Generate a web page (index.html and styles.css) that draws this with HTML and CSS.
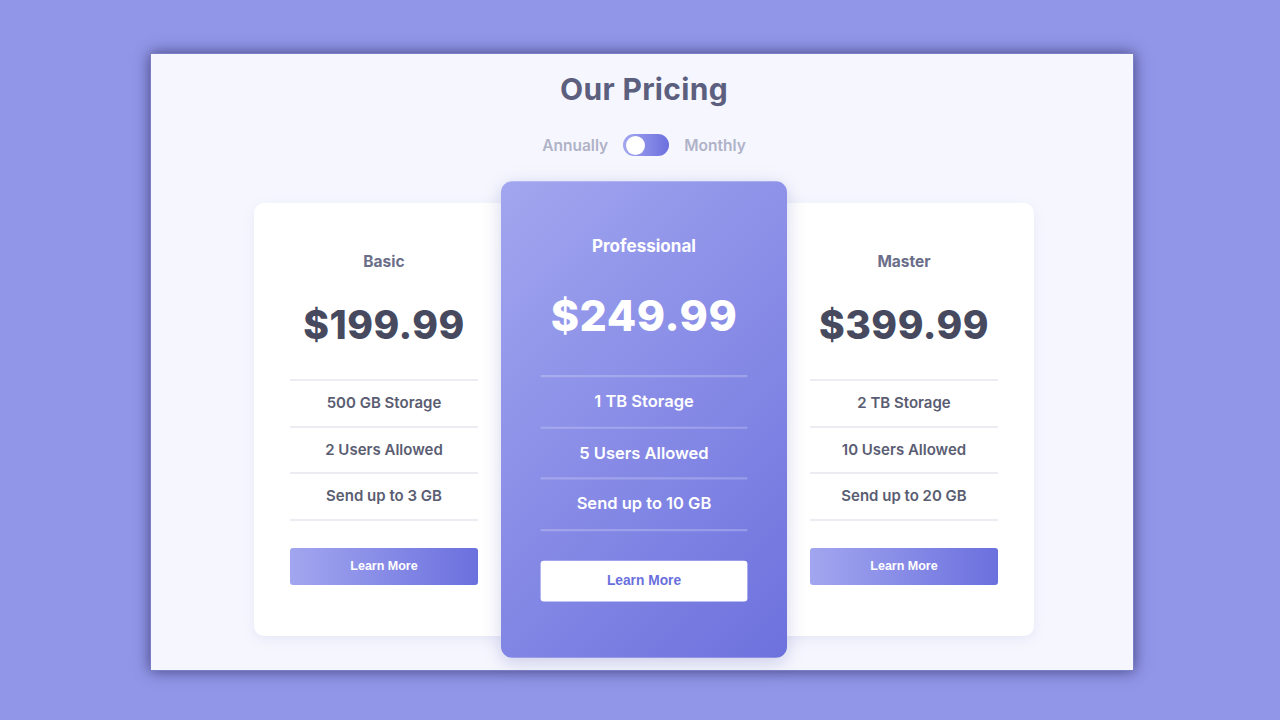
FILE: index.html
```html
<!DOCTYPE html>
<html>
<head>
<meta charset="utf-8">
<link rel="stylesheet" href="styles.css">
</head>
<body>
<div class="panel">
  <h1 class="title">Our Pricing</h1>
  <div class="toggle-row">
    <span class="toggle-label">Annually</span>
    <span class="toggle"><span class="knob"></span></span>
    <span class="toggle-label">Monthly</span>
  </div>
  <div class="cards">
    <div class="card">
      <div class="plan">Basic</div>
      <div class="price">$199.99</div>
      <ul class="features">
        <li>500 GB Storage</li>
        <li>2 Users Allowed</li>
        <li>Send up to 3 GB</li>
      </ul>
      <button class="btn">Learn More</button>
    </div>
    <div class="card card-pro">
      <div class="plan">Professional</div>
      <div class="price">$249.99</div>
      <ul class="features">
        <li>1 TB Storage</li>
        <li>5 Users Allowed</li>
        <li>Send up to 10 GB</li>
      </ul>
      <button class="btn">Learn More</button>
    </div>
    <div class="card">
      <div class="plan">Master</div>
      <div class="price">$399.99</div>
      <ul class="features">
        <li>2 TB Storage</li>
        <li>10 Users Allowed</li>
        <li>Send up to 20 GB</li>
      </ul>
      <button class="btn">Learn More</button>
    </div>
  </div>
</div>
</body>
</html>
```
FILE: styles.css
```css
html, body {
  margin: 0;
  padding: 0;
}
body {
  background: #9196e8;
  width: 1280px;
  height: 720px;
  overflow: hidden;
  font-family: "Inter", "Open Sans", sans-serif;
  padding-top: 53px;
  box-sizing: border-box;
}
.panel {
  margin-left: 150px;
  width: 984px;
  height: 618px;
  box-sizing: border-box;
  background: #f6f7fe;
  box-shadow: 0 0 14px rgba(40, 40, 90, 0.75);
  border: 1px solid #7b7fc6;
  padding-top: 15px;
  display: flex;
  flex-direction: column;
  align-items: center;
}
.title {
  margin: 0 0 0 4px;
  font-size: 30px;
  line-height: 40px;
  font-weight: 700;
  color: #5c5f7e;
  letter-spacing: 0.3px;
}
.toggle-row {
  margin-top: 25px;
  margin-left: 4px;
  display: flex;
  align-items: center;
  gap: 15px;
}
.toggle-label {
  font-size: 15.5px;
  font-weight: 600;
  color: #b0b2c8;
}
.toggle {
  width: 46px;
  height: 22px;
  border-radius: 11px;
  background: linear-gradient(90deg, #a3a7ef, #6c70de);
  display: flex;
  align-items: center;
  padding-left: 3px;
  box-sizing: border-box;
}
.knob {
  width: 19px;
  height: 19px;
  border-radius: 50%;
  background: #ffffff;
}
.cards {
  margin-top: 47px;
  margin-left: 4px;
  display: flex;
}
.card {
  width: 260px;
  height: 433px;
  box-sizing: border-box;
  background: #ffffff;
  border-radius: 10px;
  box-shadow: 0 4px 14px rgba(120, 124, 190, 0.12);
  padding: 49px 36px 0;
  display: flex;
  flex-direction: column;
  align-items: stretch;
  text-align: center;
}
.card-pro {
  transform: scale(1.1);
  z-index: 2;
  position: relative;
  background: linear-gradient(135deg, #a2a6ef 0%, #6d71dd 100%);
  box-shadow: 0 4px 16px rgba(80, 84, 170, 0.25);
}
.plan {
  font-size: 15.5px;
  line-height: 20px;
  font-weight: 700;
  color: #6b6e89;
}
.price {
  margin-top: 27px;
  font-size: 39px;
  line-height: 52px;
  font-weight: 800;
  color: #474a5f;
  letter-spacing: 0.5px;
}
.features {
  list-style: none;
  margin: 28px 0 0;
  padding: 0;
  border-top: 2px solid #ececf2;
}
.features li {
  height: 44.5px;
  line-height: 44.5px;
  border-bottom: 2px solid #ececf2;
  font-size: 15px;
  font-weight: 600;
  color: #5a5d72;
}
.btn {
  margin-top: 27px;
  height: 37px;
  border: none;
  border-radius: 3px;
  background: linear-gradient(90deg, #a2a6ef, #6b70de);
  color: #ffffff;
  font-family: "Liberation Sans", Arial, sans-serif;
  font-size: 12.5px;
  font-weight: 700;
}
.card-pro .plan,
.card-pro .price,
.card-pro .features li {
  color: #ffffff;
}
.card-pro .features {
  border-top-color: rgba(255, 255, 255, 0.22);
}
.card-pro .features li {
  border-bottom-color: rgba(255, 255, 255, 0.22);
}
.card-pro .btn {
  background: #ffffff;
  color: #6a6fdd;
}
```
